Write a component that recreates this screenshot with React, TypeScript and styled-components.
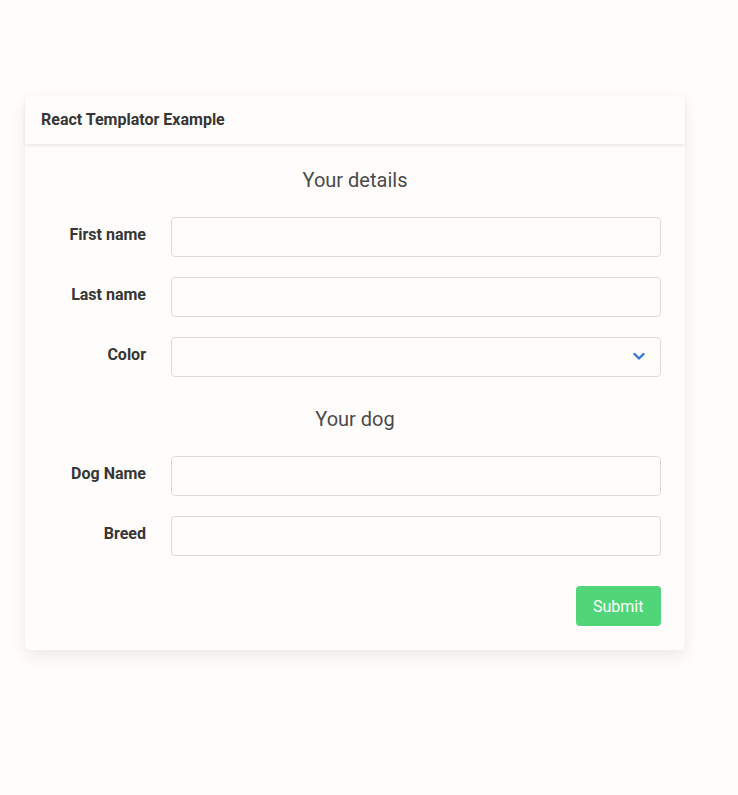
import React from "react";
import styled, { createGlobalStyle } from "styled-components";

const Global = createGlobalStyle`
  html, body { margin: 0; padding: 0; background: #fffdfc; }
  body { font-family: Roboto, "Noto Sans", sans-serif; color: #363636; }
  * { box-sizing: border-box; }
`;

const Page = styled.div`
  padding: 96px 53px 100px 25px;
`;

const Card = styled.div`
  width: 660px;
  background: #fffdfc;
  border-radius: 6px;
  box-shadow: 0 6px 16px rgba(10, 10, 10, 0.08), 0 0 1px rgba(10, 10, 10, 0.06);
`;

const CardHeader = styled.header`
  height: 48px;
  display: flex;
  align-items: center;
  padding: 0 16px 1px 16px;
  box-shadow: 0 2px 3px rgba(10, 10, 10, 0.08);
  font-weight: 700;
  font-size: 16px;
  color: #363636;
`;

const CardBody = styled.form`
  padding: 20px 24px 24px 24px;
  display: flex;
  flex-direction: column;
`;

const SectionTitle = styled.h2`
  margin: 0 0 21px 0;
  text-align: center;
  font-weight: 400;
  font-size: 20px;
  line-height: 32px;
  color: #4a4a4a;
`;

const Row = styled.div<{ $last?: boolean }>`
  display: grid;
  grid-template-columns: 97px 1fr;
  column-gap: 25px;
  margin-bottom: ${(p) => (p.$last ? "26px" : "20px")};
`;

const Label = styled.label`
  text-align: right;
  font-weight: 700;
  font-size: 16px;
  line-height: 22px;
  padding-top: 7px;
  color: #363636;
  white-space: nowrap;
`;

const Input = styled.input`
  height: 40px;
  width: 100%;
  border: 1px solid #dbdbdb;
  border-radius: 4px;
  background: #fffdfc;
  font-family: inherit;
  font-size: 16px;
  padding: 0 11px;
  outline: none;
`;

const SelectWrap = styled.div`
  position: relative;
  height: 40px;
`;

const Select = styled.select`
  appearance: none;
  height: 40px;
  width: 100%;
  border: 1px solid #dbdbdb;
  border-radius: 4px;
  background: #fffdfc;
  font-family: inherit;
  font-size: 16px;
  padding: 0 40px 0 11px;
  outline: none;
`;

const Chevron = styled.svg`
  position: absolute;
  right: 16px;
  top: 15px;
  pointer-events: none;
`;

const Actions = styled.div`
  display: flex;
  justify-content: flex-end;
  margin-top: 10px;
`;

const Button = styled.button`
  height: 40px;
  padding: 0 17.5px;
  border: none;
  border-radius: 4px;
  background: #50d679;
  color: #ffffff;
  font-family: inherit;
  font-size: 16px;
  cursor: pointer;
`;

const fieldsA = ["First name", "Last name"];

export default function App() {
  return (
    <>
      <Global />
      <Page>
        <Card>
          <CardHeader>React Templator Example</CardHeader>
          <CardBody onSubmit={(e) => e.preventDefault()}>
            <SectionTitle>Your details</SectionTitle>
            {fieldsA.map((f) => (
              <Row key={f}>
                <Label>{f}</Label>
                <Input type="text" />
              </Row>
            ))}
            <Row $last>
              <Label>Color</Label>
              <SelectWrap>
                <Select defaultValue="">
                  <option value=""></option>
                  <option value="red">Red</option>
                  <option value="green">Green</option>
                  <option value="blue">Blue</option>
                </Select>
                <Chevron width="12" height="9" viewBox="0 0 12 9">
                  <path d="M1.5 2 L6 6.5 L10.5 2" fill="none" stroke="#3273dc" strokeWidth="2.4" strokeLinecap="round" strokeLinejoin="round" />
                </Chevron>
              </SelectWrap>
            </Row>
            <SectionTitle>Your dog</SectionTitle>
            <Row>
              <Label>Dog Name</Label>
              <Input type="text" />
            </Row>
            <Row>
              <Label>Breed</Label>
              <Input type="text" />
            </Row>
            <Actions>
              <Button type="submit">Submit</Button>
            </Actions>
          </CardBody>
        </Card>
      </Page>
    </>
  );
}
